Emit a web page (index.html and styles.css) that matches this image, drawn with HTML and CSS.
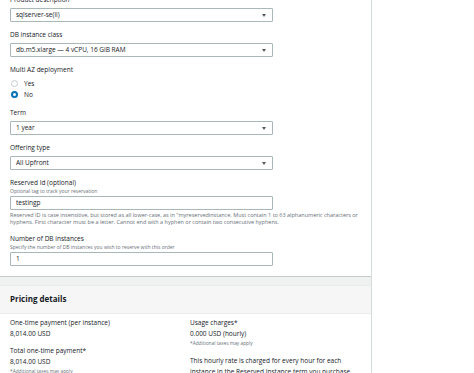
FILE: index.html
```html
<!DOCTYPE html>
<html>
<head>
    <meta charset="UTF-8">
    <title>Purchase Reserved DB Instance</title>
    <link rel="stylesheet" href="styles.css">
</head>
<body>
    <div class="page">
        <!-- Instance options -->
        <div class="form">
            <div class="field">
                <div class="label">Product description</div>
                <div class="select">sqlserver-se(li)<span class="caret"></span></div>
            </div>

            <div class="field">
                <div class="label">DB instance class</div>
                <div class="select">db.m5.xlarge — 4 vCPU, 16 GiB RAM<span class="caret"></span></div>
            </div>

            <div class="field">
                <div class="label">Multi AZ deployment</div>
                <div class="radio"><span class="dot"></span>Yes</div>
                <div class="radio"><span class="dot checked"></span>No</div>
            </div>

            <div class="field">
                <div class="label">Term</div>
                <div class="select">1 year<span class="caret"></span></div>
            </div>

            <div class="field">
                <div class="label">Offering type</div>
                <div class="select">All Upfront<span class="caret"></span></div>
            </div>

            <div class="field">
                <div class="label">Reserved Id (optional)</div>
                <div class="desc">Optional tag to track your reservation</div>
                <div class="input">testingp</div>
                <div class="hint">Reserved ID is case insensitive, but stored as all lower-case, as in "myreservedinstance. Must contain 1 to 63 alphanumeric characters or hyphens. First character must be a letter. Cannot end with a hyphen or contain two consecutive hyphens.</div>
            </div>

            <div class="field last">
                <div class="label">Number of DB instances</div>
                <div class="desc">Specify the number of DB instances you wish to reserve with this order</div>
                <div class="input">1</div>
            </div>
        </div>

        <div class="gap"></div>

        <!-- Pricing -->
        <div class="pricing">
            <div class="pricing-head">Pricing details</div>
            <div class="pricing-body">
                <div class="col">
                    <div class="label">One-time payment (per instance)</div>
                    <div class="value">8,014.00 USD</div>
                    <div class="label spaced">Total one-time payment*</div>
                    <div class="value">8,014.00 USD</div>
                    <div class="note">*Additional taxes may apply</div>
                </div>
                <div class="col wide">
                    <div class="label">Usage charges*</div>
                    <div class="value">0.000 USD (hourly)</div>
                    <div class="note">*Additional taxes may apply</div>
                    <p class="para">This hourly rate is charged for every hour for each instance in the Reserved Instance term you purchase.</p>
                </div>
            </div>
        </div>
    </div>
</body>
</html>
```

FILE: styles.css
```css
body {
    margin: 0;
    background-color: #ffffff;
    font-family: "Open Sans", "Noto Sans", sans-serif;
    color: #16191f;
    font-size: 6.5px;
    overflow: hidden;
}
.page {
    width: 371px;
    border-right: 1px solid #d5dbdb;
    margin-top: -5px;
    min-height: 400px;
}
.form {
    padding: 0 10px 10px 10px;
    border-bottom: 1px solid #c6cbcb;
}
.field {
    margin-bottom: 8px;
}
.field.last {
    margin-bottom: 0;
}
.label {
    line-height: 10px;
    margin-bottom: 3px;
}
.select, .input {
    position: relative;
    width: 256px;
    height: 12px;
    line-height: 12px;
    border: 1px solid #aab7b8;
    border-radius: 1px;
    padding-left: 5px;
}
.caret {
    position: absolute;
    right: 6px;
    top: 5px;
    width: 0;
    height: 0;
    border-left: 2.5px solid transparent;
    border-right: 2.5px solid transparent;
    border-top: 3px solid #545b64;
}
.radio {
    display: flex;
    align-items: center;
    height: 11px;
    padding-left: 1px;
}
.dot {
    width: 5px;
    height: 5px;
    border: 1px solid #c4cccd;
    border-radius: 50%;
    margin-right: 6px;
}
.dot.checked {
    width: 3px;
    height: 3px;
    border: 2px solid #0073bb;
    background-color: #ffffff;
}
.desc {
    font-size: 5px;
    line-height: 8px;
    color: #687078;
    margin-top: -4px;
    margin-bottom: 1px;
}
.hint {
    font-size: 5.5px;
    line-height: 7px;
    color: #687078;
    margin-top: 2px;
    width: 355px;
}
.gap {
    height: 8px;
    background-color: #f0f1f1;
}
.pricing-head {
    background-color: #f6f6f6;
    border-top: 1px solid #e9ebeb;
    border-bottom: 1px solid #eaeded;
    height: 27px;
    line-height: 26px;
    padding-left: 10px;
    font-weight: bold;
    font-size: 8px;
}
.pricing-body {
    display: flex;
    padding: 4px 10px 0 10px;
}
.col {
    flex: none;
    width: 180px;
}
.col.wide {
    flex: 1;
    width: auto;
}
.col .label {
    margin-bottom: 1px;
}
.label.spaced {
    margin-top: 7px;
}
.value {
    line-height: 10px;
}
.note {
    font-size: 4.8px;
    line-height: 9px;
    color: #687078;
}
.para {
    margin: 7px 0 0 0;
    line-height: 11px;
    width: 165px;
}
```
